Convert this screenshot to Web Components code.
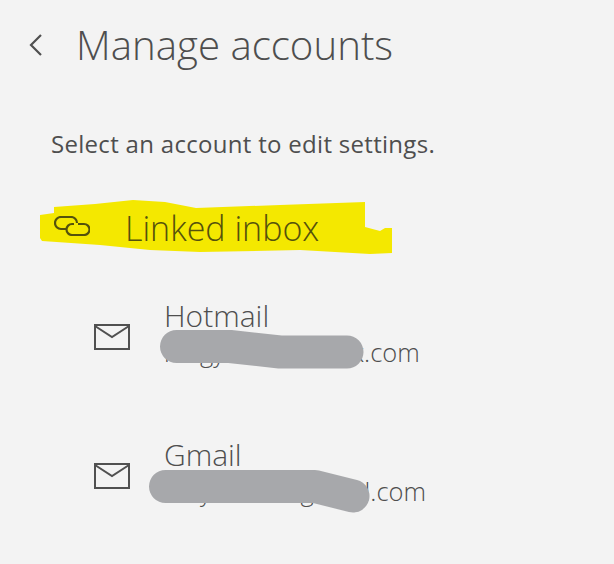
<!DOCTYPE html>
<html lang="en">
<head>
<meta charset="utf-8">
<title>Manage accounts</title>
<style>
  html, body {
    margin: 0;
    height: 100%;
    overflow: hidden;
    background: #f3f3f3;
  }
</style>
</head>
<body>
<manage-accounts>
  <span slot="title">Manage accounts</span>
  <span slot="hint">Select an account to edit settings.</span>
  <linked-inbox>Linked inbox</linked-inbox>
  <account-row name="Hotmail" mail="magynxxxxxxxmx.com" mark="hotmail"></account-row>
  <account-row name="Gmail" mail="mayxxxxxxxgxxxxl.com" mark="gmail"></account-row>
</manage-accounts>

<script>
class ManageAccounts extends HTMLElement {
  constructor() {
    super();
    this.shadowDOM = this.attachShadow({ mode: 'open' });
    this.shadowDOM.innerHTML = `
      <style>
        :host {
          display: block;
          height: 564px;
          box-sizing: border-box;
          padding-top: 19px;
          background: #f3f3f3;
          color: #4e4e4e;
          font-family: "Open Sans", "Noto Sans", sans-serif;
        }
        header {
          display: flex;
          align-items: center;
          height: 52px;
          padding-left: 28px;
        }
        svg { display: block; }
        h1 {
          margin: 0 0 0 32px;
          font-size: 40.2px;
          font-weight: 300;
          line-height: 52px;
          white-space: nowrap;
        }
        p {
          margin: 57px 0 0 51px;
          font-size: 24px;
          line-height: 32px;
          letter-spacing: 0.3px;
          white-space: nowrap;
        }
      </style>
      <header>
        <svg width="16" height="24" viewBox="0 0 16 24" fill="none">
          <path d="M13 2 L3 12 L13 22" stroke="#505050" stroke-width="2.2"/>
        </svg>
        <h1><slot name="title"></slot></h1>
      </header>
      <p><slot name="hint"></slot></p>
      <slot></slot>
    `;
  }
}

class LinkedInbox extends HTMLElement {
  constructor() {
    super();
    this.shadowDOM = this.attachShadow({ mode: 'open' });
    this.shadowDOM.innerHTML = `
      <style>
        :host {
          display: flex;
          align-items: center;
          position: relative;
          height: 40px;
          margin-top: 48px;
          padding-left: 54px;
          color: #54520c;
          font-size: 34px;
          font-weight: 300;
          white-space: nowrap;
        }
        .paint { position: absolute; left: 0; top: -8px; }
        .link { position: relative; display: block; margin-bottom: 4px; }
        .label { position: relative; margin-left: 35px; }
      </style>
      <svg class="paint" width="400" height="64" viewBox="0 0 400 64">
        <path fill="#f4e800" d="M40 15 L54 13 L54 7 L95 4 L133 0 L165 2 L196 8 L280 5 L365 2 L365 27
          L380 31 L385 28 L392 28 L392 53 L370 54 L300 50 L200 52 L150 50 L100 45 L42 41 L40 38 Z"/>
      </svg>
      <svg class="link" width="36" height="20" viewBox="0 0 36 20" fill="none" stroke="#54520c" stroke-width="2.2">
        <path d="M12 13 H7 a6 6 0 0 1 0 -12 H17 a6 6 0 0 1 6 6"/>
        <path d="M24 8 H30 a5.5 5.5 0 0 1 0 11 H18 a5.5 5.5 0 0 1 0 -11 H20"/>
      </svg>
      <span class="label"><slot></slot></span>
    `;
  }
}

class AccountRow extends HTMLElement {
  constructor() {
    super();
    this.shadowDOM = this.attachShadow({ mode: 'open' });
  }

  connectedCallback() {
    this.render();
  }

  render() {
    const marks = {
      hotmail: { left: -4, top: 32, d: 'M16.5 16.5 H70 L120 22 H187' },
      gmail: { left: -15, top: 33, d: 'M16.5 16.5 H166 L204 26' },
    };
    const mark = marks[this.getAttribute('mark')];
    this.shadowDOM.innerHTML = `
      <style>
        :host {
          display: flex;
          align-items: center;
          height: 72px;
          margin-top: 53px;
          padding-left: 94px;
        }
        :host(:last-child) { margin-top: 67px; }
        .text {
          position: relative;
          margin: 0 0 6px 34px;
          white-space: nowrap;
        }
        .name { font-size: 30px; line-height: 36px; font-weight: 300; }
        .mail { font-size: 25.5px; line-height: 36px; font-weight: 300; }
        .ink { position: absolute; left: ${mark.left}px; top: ${mark.top}px; overflow: visible; }
      </style>
      <svg width="36" height="26" viewBox="0 0 36 26" fill="none" stroke="#505050" stroke-width="2">
        <rect x="1" y="1" width="34" height="24"/>
        <path d="M1 2 L18 13 L35 2"/>
      </svg>
      <div class="text">
        <div class="name">${this.getAttribute('name')}</div>
        <div class="mail">${this.getAttribute('mail')}</div>
        <svg class="ink" width="220" height="44" fill="none">
          <path d="${mark.d}" stroke="#a7a8ab" stroke-width="33" stroke-linecap="round" stroke-linejoin="round"/>
        </svg>
      </div>
    `;
  }
}

customElements.define('manage-accounts', ManageAccounts);
customElements.define('linked-inbox', LinkedInbox);
customElements.define('account-row', AccountRow);
</script>
</body>
</html>
